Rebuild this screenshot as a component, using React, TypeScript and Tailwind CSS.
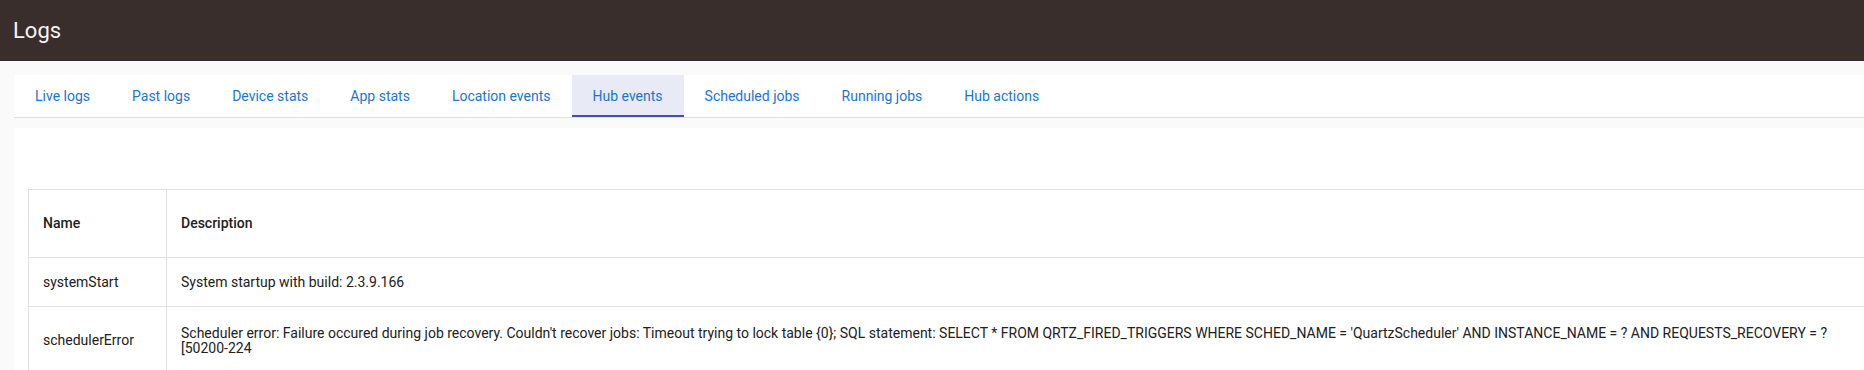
import React from 'react';

const tabs = [
  'Live logs',
  'Past logs',
  'Device stats',
  'App stats',
  'Location events',
  'Hub events',
  'Scheduled jobs',
  'Running jobs',
  'Hub actions',
];

const activeTab = 'Hub events';

const events = [
  { name: 'systemStart', description: 'System startup with build: 2.3.9.166' },
  {
    name: 'schedulerError',
    description:
      "Scheduler error: Failure occured during job recovery. Couldn't recover jobs: Timeout trying to lock table {0}; SQL statement: SELECT * FROM QRTZ_FIRED_TRIGGERS WHERE SCHED_NAME = 'QuartzScheduler' AND INSTANCE_NAME = ? AND REQUESTS_RECOVERY = ? [50200-224",
  },
];

export default function App() {
  return (
    <div className="min-h-screen bg-[#fafafa] font-['Roboto',sans-serif] overflow-hidden">
      <header className="h-[61px] bg-[#392e2b] flex items-center pl-[13px]">
        <h1 className="text-[22px] text-[#f5f5f5] font-normal">Logs</h1>
      </header>

      <div className="pl-[14px] pt-[14px]">
        <nav className="bg-white flex border-b border-[#e0e0e0]">
          {tabs.map((tab) => (
            <div
              key={tab}
              className={
                tab === activeTab
                  ? 'h-[42px] px-[21px] flex items-center text-[14px] text-[#1976d2] bg-[#e8eaf6] border-b-2 border-[#3f51b5] pt-[2px]'
                  : 'h-[42px] px-[21px] flex items-center text-[14px] text-[#1976d2]'
              }
            >
              {tab}
            </div>
          ))}
        </nav>

        <section className="mt-[10px] bg-white pl-[14px] pt-[61px]">
          <table className="w-full border-collapse text-[14px] text-[#212121]">
            <thead>
              <tr>
                <th className="w-[138px] h-[68px] px-[14px] text-left font-medium border border-[#e0e0e0]">Name</th>
                <th className="h-[68px] px-[14px] text-left font-medium border border-r-0 border-[#e0e0e0]">Description</th>
              </tr>
            </thead>
            <tbody>
              {events.map((ev, i) => (
                <tr key={ev.name}>
                  <td className={(i === 0 ? 'h-[49px]' : 'h-[68px]') + ' px-[14px] border border-[#e0e0e0]'}>{ev.name}</td>
                  <td className={(i === 0 ? 'h-[49px]' : 'h-[68px] leading-[15px] pt-[1px]') + ' px-[14px] border border-r-0 border-[#e0e0e0]'}>
                    {ev.description}
                  </td>
                </tr>
              ))}
            </tbody>
          </table>
        </section>
      </div>
    </div>
  );
}
